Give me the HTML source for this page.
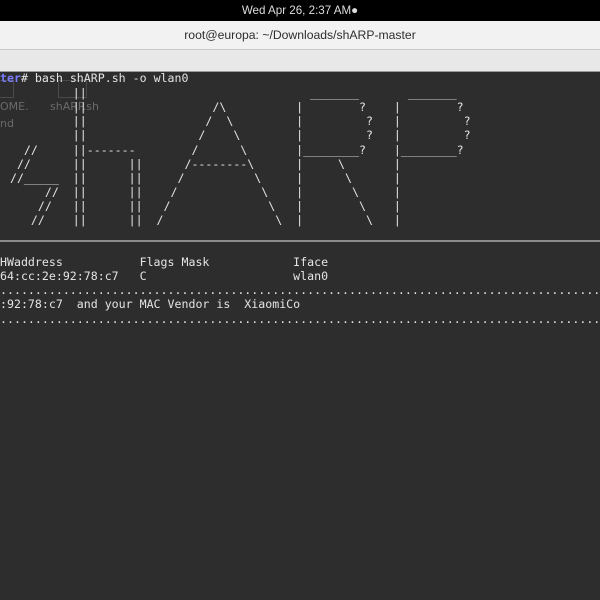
<!DOCTYPE html>
<html><head><meta charset="utf-8"><style>
html,body{margin:0;padding:0;width:600px;height:600px;overflow:hidden;background:#2d2d2d}
.top{position:absolute;left:0;top:0;width:600px;height:21px;background:#000;color:#ddd;font:11.6px "Liberation Sans",sans-serif;text-align:center;line-height:21px}
.title{position:absolute;left:0;top:21px;width:600px;height:28px;background:#f2f2f2;border-bottom:1px solid #c8c8c8;color:#2e2e2e;font:12.2px "Liberation Sans",sans-serif;text-align:center;line-height:28px}
.tool{position:absolute;left:0;top:50px;width:600px;height:21px;background:#e8e8e8;border-bottom:1px solid #999}
pre{position:absolute;margin:0;font-family:"DejaVu Sans Mono","Liberation Mono",monospace;font-size:11.6px;line-height:14.15px;color:#e4e4e4;white-space:pre}
.ghost{position:absolute;color:#6a6a6a;font:11px "DejaVu Sans","Liberation Sans",sans-serif}
.gbox{position:absolute;border:1px solid #4a4a4a}
</style></head><body>
<div class="top">Wed Apr 26,  2:37 AM&#9679;</div>
<div class="title">root@europa: ~/Downloads/shARP-master</div>
<div class="tool"></div>
<div class="gbox" style="left:-2px;top:80px;width:14px;height:16px"></div>
<div class="gbox" style="left:58px;top:80px;width:27px;height:16px"></div>
<div class="ghost" style="left:0;top:100px">OME.</div>
<div class="ghost" style="left:50px;top:100px">shARP.sh</div>
<div class="ghost" style="left:0;top:117px">nd</div>
<pre style="left:0;top:71px"><span style="color:#7b7bff;font-weight:bold">ter</span># bash shARP.sh -o wlan0</pre>
<pre style="left:-4px;top:86px">           ||                                _______       _______
           ||                  /\          |        ?    |        ?
           ||                 /  \         |         ?   |         ?
           ||                /    \        |         ?   |         ?
    //     ||-------        /      \       |________?    |________?
   //      ||      ||      /--------\      |     \       |
  //_____  ||      ||     /          \     |      \      |
       //  ||      ||    /            \    |       \     |
      //   ||      ||   /              \   |        \    |
     //    ||      ||  /                \  |         \   |</pre>
<div style="position:absolute;left:0;top:240px;width:600px;height:2px;background:#8a8a8a"></div>
<pre style="left:0;top:255px">HWaddress           Flags Mask            Iface
64:cc:2e:92:78:c7   C                     wlan0
.........................................................................................
:92:78:c7  and your MAC Vendor is  XiaomiCo
.........................................................................................</pre>
</body></html>
